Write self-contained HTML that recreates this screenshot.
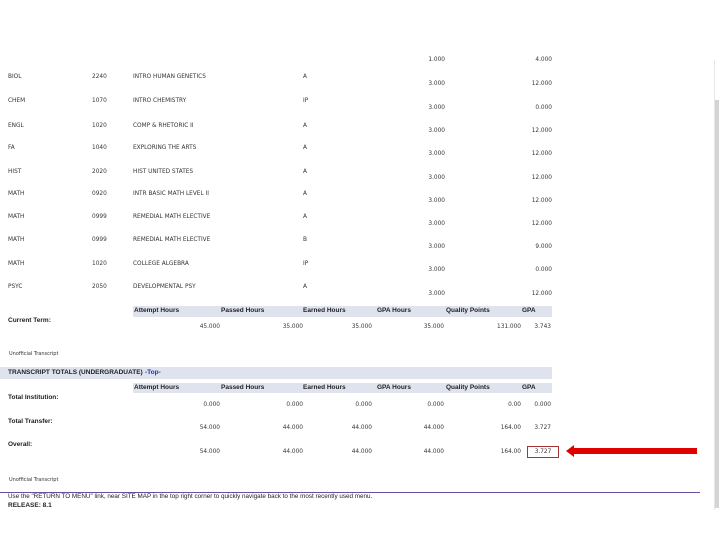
<!DOCTYPE html>
<html><head><meta charset="utf-8"><style>
body{margin:0;width:720px;height:540px;background:#fff;position:relative;overflow:hidden;font-family:"DejaVu Sans","Liberation Sans",sans-serif;font-size:5.8px;color:#333;}
div{position:absolute;white-space:nowrap;line-height:8px;}
.b{font-weight:bold;color:#222;font-family:"Liberation Sans",sans-serif;font-size:6.5px;}
.r{text-align:right;width:60px;}
.band{background:#dfe3ee;}
</style></head><body>
<div class="r" style="left:385px;top:56px">1.000</div><div class="r" style="left:492px;top:56px">4.000</div>

<div style="left:8px;top:73px">BIOL</div><div style="left:92px;top:73px">2240</div><div style="left:133px;top:73px">INTRO HUMAN GENETICS</div><div style="left:303px;top:73px">A</div>
<div class="r" style="left:385px;top:80px">3.000</div><div class="r" style="left:492px;top:80px">12.000</div>

<div style="left:8px;top:97px">CHEM</div><div style="left:92px;top:97px">1070</div><div style="left:133px;top:97px">INTRO CHEMISTRY</div><div style="left:303px;top:97px">IP</div>
<div class="r" style="left:385px;top:104px">3.000</div><div class="r" style="left:492px;top:104px">0.000</div>

<div style="left:8px;top:122px">ENGL</div><div style="left:92px;top:122px">1020</div><div style="left:133px;top:122px">COMP &amp; RHETORIC II</div><div style="left:303px;top:122px">A</div>
<div class="r" style="left:385px;top:127px">3.000</div><div class="r" style="left:492px;top:127px">12.000</div>

<div style="left:8px;top:144px">FA</div><div style="left:92px;top:144px">1040</div><div style="left:133px;top:144px">EXPLORING THE ARTS</div><div style="left:303px;top:144px">A</div>
<div class="r" style="left:385px;top:150px">3.000</div><div class="r" style="left:492px;top:150px">12.000</div>

<div style="left:8px;top:168px">HIST</div><div style="left:92px;top:168px">2020</div><div style="left:133px;top:168px">HIST UNITED STATES</div><div style="left:303px;top:168px">A</div>
<div class="r" style="left:385px;top:174px">3.000</div><div class="r" style="left:492px;top:174px">12.000</div>

<div style="left:8px;top:190px">MATH</div><div style="left:92px;top:190px">0920</div><div style="left:133px;top:190px">INTR BASIC MATH LEVEL II</div><div style="left:303px;top:190px">A</div>
<div class="r" style="left:385px;top:197px">3.000</div><div class="r" style="left:492px;top:197px">12.000</div>

<div style="left:8px;top:213px">MATH</div><div style="left:92px;top:213px">0999</div><div style="left:133px;top:213px">REMEDIAL MATH ELECTIVE</div><div style="left:303px;top:213px">A</div>
<div class="r" style="left:385px;top:220px">3.000</div><div class="r" style="left:492px;top:220px">12.000</div>

<div style="left:8px;top:236px">MATH</div><div style="left:92px;top:236px">0999</div><div style="left:133px;top:236px">REMEDIAL MATH ELECTIVE</div><div style="left:303px;top:236px">B</div>
<div class="r" style="left:385px;top:243px">3.000</div><div class="r" style="left:492px;top:243px">9.000</div>

<div style="left:8px;top:260px">MATH</div><div style="left:92px;top:260px">1020</div><div style="left:133px;top:260px">COLLEGE ALGEBRA</div><div style="left:303px;top:260px">IP</div>
<div class="r" style="left:385px;top:266px">3.000</div><div class="r" style="left:492px;top:266px">0.000</div>

<div style="left:8px;top:283px">PSYC</div><div style="left:92px;top:283px">2050</div><div style="left:133px;top:283px">DEVELOPMENTAL PSY</div><div style="left:303px;top:283px">A</div>
<div class="r" style="left:385px;top:290px">3.000</div><div class="r" style="left:492px;top:290px">12.000</div>

<div class="band" style="left:133px;top:306px;width:419px;height:11px"></div>
<div class="b" style="left:134px;top:307px">Attempt Hours</div><div class="b" style="left:221px;top:307px">Passed Hours</div><div class="b" style="left:303px;top:307px">Earned Hours</div><div class="b" style="left:377px;top:307px">GPA Hours</div><div class="b" style="left:446px;top:307px">Quality Points</div><div class="b" style="left:522px;top:307px">GPA</div>
<div class="b" style="left:8px;top:317px">Current Term:</div>
<div class="r" style="left:160px;top:323px">45.000</div><div class="r" style="left:243px;top:323px">35.000</div><div class="r" style="left:312px;top:323px">35.000</div><div class="r" style="left:384px;top:323px">35.000</div><div class="r" style="left:461px;top:323px">131.000</div><div class="r" style="left:491px;top:323px">3.743</div>

<div style="left:9px;top:350px;font-size:5px">Unofficial Transcript</div>
<div class="band" style="left:0;top:367px;width:552px;height:12px"></div>
<div class="b" style="left:8px;top:369px">TRANSCRIPT TOTALS (UNDERGRADUATE)</div><div class="b" style="left:145px;top:369px;color:#2233aa">-Top-</div>
<div class="band" style="left:133px;top:383px;width:419px;height:10px"></div>
<div class="b" style="left:134px;top:384px">Attempt Hours</div><div class="b" style="left:221px;top:384px">Passed Hours</div><div class="b" style="left:303px;top:384px">Earned Hours</div><div class="b" style="left:377px;top:384px">GPA Hours</div><div class="b" style="left:446px;top:384px">Quality Points</div><div class="b" style="left:522px;top:384px">GPA</div>

<div class="b" style="left:8px;top:394px">Total Institution:</div>
<div class="r" style="left:160px;top:401px">0.000</div><div class="r" style="left:243px;top:401px">0.000</div><div class="r" style="left:312px;top:401px">0.000</div><div class="r" style="left:384px;top:401px">0.000</div><div class="r" style="left:461px;top:401px">0.00</div><div class="r" style="left:491px;top:401px">0.000</div>
<div class="b" style="left:8px;top:418px">Total Transfer:</div>
<div class="r" style="left:160px;top:424px">54.000</div><div class="r" style="left:243px;top:424px">44.000</div><div class="r" style="left:312px;top:424px">44.000</div><div class="r" style="left:384px;top:424px">44.000</div><div class="r" style="left:461px;top:424px">164.00</div><div class="r" style="left:491px;top:424px">3.727</div>
<div class="b" style="left:8px;top:441px">Overall:</div>
<div class="r" style="left:160px;top:448px">54.000</div><div class="r" style="left:243px;top:448px">44.000</div><div class="r" style="left:312px;top:448px">44.000</div><div class="r" style="left:384px;top:448px">44.000</div><div class="r" style="left:461px;top:448px">164.00</div>
<div style="left:527px;top:446px;width:30px;height:10px;border:1px solid #a33;text-align:center;line-height:10px">3.727</div>

<svg style="position:absolute;left:560px;top:443px" width="140" height="16"><polygon points="6,8 14,2 14,5 137,5 137,11 14,11 14,14" fill="#e00000"/></svg>

<div style="left:9px;top:476px;font-size:5px">Unofficial Transcript</div>
<div style="left:0;top:492px;width:700px;height:1px;background:#6a4fa0"></div>
<div style="left:8px;top:493px;color:#222;font-family:'Liberation Sans',sans-serif;font-size:6.3px">Use the "RETURN TO MENU" link, near SITE MAP in the top right corner to quickly navigate back to the most recently used menu.</div>
<div class="b" style="left:8px;top:502px">RELEASE: 8.1</div>

<div style="left:714px;top:60px;width:1px;height:450px;background:#e6e6e6"></div>
<div style="left:715px;top:100px;width:4px;height:408px;background:#d4d4d4"></div>
</body></html>
